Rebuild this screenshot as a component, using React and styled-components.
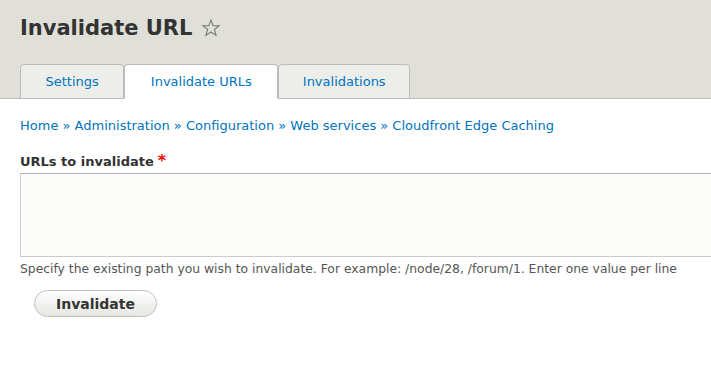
import React from 'react';
import styled, { createGlobalStyle } from 'styled-components';

const GlobalStyle = createGlobalStyle`
  html, body {
    margin: 0;
    padding: 0;
    overflow: hidden;
    background: #fff;
  }
  body {
    font-family: "DejaVu Sans", "Liberation Sans", sans-serif;
    color: #333;
  }
`;

const Header = styled.div`
  background: #e0e0d8;
  border-bottom: 1px solid #bbb;
  padding: 12px 20px 0;
`;

const Title = styled.h1`
  margin: 0;
  display: flex;
  align-items: center;
  gap: 9px;
  font-size: 21px;
  font-weight: bold;
  color: #333;
  line-height: 32px;
`;

const Star = styled.svg`
  width: 20px;
  height: 20px;
`;

const Tabs = styled.ul`
  display: flex;
  list-style: none;
  margin: 20px 0 -1px;
  padding: 0;
`;

const Tab = styled.li`
  padding: 0 ${(p) => p.$pad}px;
  height: 33px;
  line-height: 33px;
  font-size: 13px;
  color: #0074bd;
  background: ${(p) => (p.$active ? '#fff' : '#ededea')};
  border: 1px solid #bbb;
  border-bottom-color: ${(p) => (p.$active ? '#fff' : '#bbb')};
  border-radius: 4px 4px 0 0;
`;

const Content = styled.div`
  padding: 18px 20px 0;
`;

const Breadcrumb = styled.div`
  font-size: 13px;
  color: #0074bd;
  line-height: 18px;
`;

const Label = styled.label`
  display: block;
  margin-top: 18px;
  font-size: 13px;
  font-weight: bold;
  line-height: 18px;
`;

const Required = styled.span`
  color: #e00;
  margin-left: 4px;
  font-size: 16px;
  vertical-align: top;
  line-height: 16px;
`;

const TextArea = styled.textarea`
  display: block;
  box-sizing: border-box;
  width: 760px;
  height: 84px;
  margin-top: 2px;
  background: #fcfcfa;
  border: 1px solid #ccc;
  border-top-color: #b4b4b4;
  resize: none;
`;

const Description = styled.div`
  margin-top: 4px;
  font-size: 12.35px;
  color: #555;
  line-height: 16px;
`;

const Button = styled.button`
  margin: 13px 0 0 14px;
  height: 27px;
  padding: 0 21px;
  font-family: inherit;
  font-size: 14px;
  font-weight: bold;
  color: #333;
  border: 1px solid #c0c0c0;
  border-radius: 20px;
  background: linear-gradient(#fefefe, #e6e6e2);
`;

export default function App() {
  return (
    <>
      <GlobalStyle />
      <Header>
        <Title>
          Invalidate URL
          <Star viewBox="0 0 24 24" fill="none" stroke="#777" strokeWidth="1.3" strokeLinejoin="miter">
            <polygon points="12,2.5 14.6,9.2 21.6,9.4 16.1,13.8 18,20.8 12,16.8 6,20.8 7.9,13.8 2.4,9.4 9.4,9.2" />
          </Star>
        </Title>
        <Tabs>
          <Tab $pad={24.5}>Settings</Tab>
          <Tab $pad={25.5} $active>Invalidate URLs</Tab>
          <Tab $pad={23.5}>Invalidations</Tab>
        </Tabs>
      </Header>
      <Content>
        <Breadcrumb>
          Home » Administration » Configuration » Web services » Cloudfront Edge Caching
        </Breadcrumb>
        <Label>
          URLs to invalidate<Required>*</Required>
        </Label>
        <TextArea />
        <Description>
          Specify the existing path you wish to invalidate. For example: /node/28, /forum/1. Enter one value per line
        </Description>
        <Button>Invalidate</Button>
      </Content>
    </>
  );
}
